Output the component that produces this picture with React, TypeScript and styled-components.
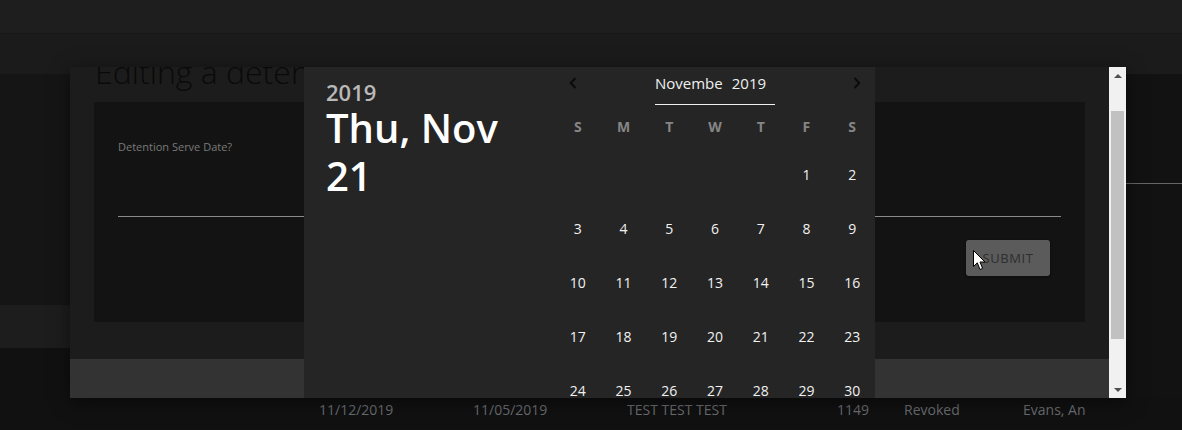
import styled, { createGlobalStyle } from "styled-components";

const GlobalStyle = createGlobalStyle`
  html, body {
    margin: 0;
    padding: 0;
    background: #111;
    overflow: hidden;
  }

  body {
    font-family: "Open Sans", "Noto Sans", sans-serif;
    color: #eee;
  }
`;

const weekDays = ["S", "M", "T", "W", "T", "F", "S"];

// november 2019 starts on a friday
const buildDays = () => {
  const cells: (number | null)[] = [null, null, null, null, null];
  for (let d = 1; d <= 30; d++) cells.push(d);
  return cells;
};

const rows = [
  ["11/12/2019", "11/05/2019", "TEST TEST TEST", "1149", "Revoked", "Evans, An"],
];

const Chevron = ({ dir }: { dir: "left" | "right" }) => (
  <svg width="8" height="12" viewBox="0 0 8 12">
    <path
      d={dir === "left" ? "M6.5 1 L1.8 6 L6.5 11" : "M1.5 1 L6.2 6 L1.5 11"}
      fill="none"
      stroke="#0b0b0b"
      strokeWidth="2"
    />
  </svg>
);

const Pointer = () => (
  <svg width="13" height="21" viewBox="0 0 13 21">
    <path
      d="M0.5 0.5 L0.5 16.5 L4.3 12.8 L7 19.5 L9.6 18.4 L7 12 L12 12 Z"
      fill="#fff"
      stroke="#000"
      strokeWidth="1"
    />
  </svg>
);

const App = () => {
  const days = buildDays();

  return (
    <>
      <GlobalStyle />
      <Page>
        <TopBar />
        <SubHeader />
        <Main>
          <LeftPane>
            <FormBlock />
            <Band />
            <Filler />
          </LeftPane>
          <RightPane>
            <RightTop />
          </RightPane>
        </Main>
        {rows.map((r, i) => (
          <TableRow key={i}>
            {r.map((c, j) => (
              <Cell key={j} $align={j === 3 ? "right" : "left"}>{c}</Cell>
            ))}
          </TableRow>
        ))}

        <Modal>
          <ModalBody>
            <Title>Editing a detention</Title>
            <Card>
              <FieldLabel>Detention Serve Date?</FieldLabel>
              <FieldInput />
              <Actions>
                <SubmitButton>SUBMIT</SubmitButton>
              </Actions>
            </Card>
            <ModalFooter />
          </ModalBody>
          <ScrollBar>
            <ScrollArrow $dir="up" />
            <ScrollTrack>
              <ScrollThumb style={{ marginTop: 27, height: 228 }} />
            </ScrollTrack>
            <ScrollArrow $dir="down" />
          </ScrollBar>
        </Modal>

        <Picker>
          <PickerHeader>
            <Year>2019</Year>
            <SelectedDate>Thu, Nov 21</SelectedDate>
          </PickerHeader>
          <Calendar>
            <NavRow>
              <NavButton><Chevron dir="left" /></NavButton>
              <MonthTitle>
                <span>Novembe</span>
                <span>2019</span>
              </MonthTitle>
              <NavButton><Chevron dir="right" /></NavButton>
            </NavRow>
            <WeekRow>
              {weekDays.map((d, i) => <WeekDay key={i}>{d}</WeekDay>)}
            </WeekRow>
            <DayGrid>
              {days.map((d, i) => <Day key={i}>{d ?? ""}</Day>)}
            </DayGrid>
          </Calendar>
        </Picker>

        <Cursor><Pointer /></Cursor>
      </Page>
    </>
  );
};

const Page = styled.div`
  position: relative;
  width: 1182px;
  height: 430px;
  overflow: hidden;
  display: flex;
  flex-direction: column;
  background: #111;
`;

const TopBar = styled.div`
  height: 33px;
  background: #1e1e1e;
  border-bottom: 1px solid #171717;
`;

const SubHeader = styled.div`
  height: 40px;
  background: #1b1b1b;
`;

const Main = styled.div`
  display: flex;
  height: 324px;
`;

const LeftPane = styled.div`
  flex: 1;
  display: flex;
  flex-direction: column;
`;

const FormBlock = styled.div`
  height: 231px;
  background: #151515;
`;

const Band = styled.div`
  height: 43px;
  background: #1d1d1d;
`;

const Filler = styled.div`
  flex: 1;
  background: #111;
`;

const RightPane = styled.div`
  width: 500px;
  background: #121212;
`;

const RightTop = styled.div`
  height: 109px;
  border-bottom: 1px solid #666;
`;

const TableRow = styled.div`
  display: grid;
  grid-template-columns: 154px 154px 160px 82px 35px 119px auto;
  padding-left: 319px;
  height: 32px;
  line-height: 24px;
  font-size: 14px;
  color: #6b6f73;
`;

const Cell = styled.div<{ $align: "left" | "right" }>`
  white-space: nowrap;
  text-align: ${p => p.$align};

  &:nth-child(4) {
    grid-column: 4;
  }

  &:nth-child(5) {
    grid-column: 6;
  }

  &:nth-child(6) {
    grid-column: 7;
  }
`;

const Modal = styled.div`
  position: absolute;
  left: 70px;
  top: 67px;
  width: 1056px;
  height: 331px;
  display: flex;
  box-shadow: 0 4px 18px rgba(0, 0, 0, 0.5);
`;

const ModalBody = styled.div`
  flex: 1;
  overflow: hidden;
  background: #1c1c1c;
  display: flex;
  flex-direction: column;
`;

const Title = styled.h2`
  margin: -15px 0 10px;
  padding-left: 25px;
  font-size: 32px;
  line-height: 40px;
  font-weight: 300;
  color: #0a0a0a;
  white-space: nowrap;
`;

const Card = styled.div`
  margin: 0 24px;
  height: 220px;
  box-sizing: border-box;
  padding: 37px 24px 0;
  background: #131313;
  display: flex;
  flex-direction: column;
`;

const FieldLabel = styled.label`
  font-size: 11px;
  line-height: 16px;
  color: #7a7a7a;
`;

const FieldInput = styled.div`
  height: 61px;
  border-bottom: 1px solid #8a8a8a;
`;

const Actions = styled.div`
  display: flex;
  justify-content: flex-end;
  padding: 23px 11px 0 0;
`;

const SubmitButton = styled.button`
  width: 84px;
  height: 36px;
  border: none;
  border-radius: 3px;
  background: #5b5b5b;
  color: #2e2e2e;
  font-family: inherit;
  font-size: 13px;
  letter-spacing: 0.6px;
  box-shadow: 0 1px 3px rgba(0, 0, 0, 0.4);
`;

const ModalFooter = styled.div`
  margin-top: 37px;
  flex: 1;
  background: #333;
`;

const ScrollBar = styled.div`
  width: 17px;
  background: #f1f1f1;
  display: flex;
  flex-direction: column;
`;

const ScrollArrow = styled.div<{ $dir: "up" | "down" }>`
  height: 17px;
  display: flex;
  align-items: center;
  justify-content: center;

  &::after {
    content: "";
    width: 0;
    height: 0;
    border-left: 4px solid transparent;
    border-right: 4px solid transparent;
    ${p => p.$dir === "up"
      ? "border-bottom: 4px solid #505050;"
      : "border-top: 4px solid #505050;"}
  }
`;

const ScrollTrack = styled.div`
  flex: 1;
  padding: 0 2px;
`;

const ScrollThumb = styled.div`
  background: #c1c1c1;
`;

const Picker = styled.div`
  position: absolute;
  left: 304px;
  top: 67px;
  width: 571px;
  height: 331px;
  overflow: hidden;
  background: #252525;
  display: flex;
`;

const PickerHeader = styled.div`
  width: 251px;
  box-sizing: border-box;
  padding: 13px 22px 0;
`;

const Year = styled.div`
  font-size: 22px;
  line-height: 24px;
  font-weight: 600;
  color: #b9b9b9;
`;

const SelectedDate = styled.div`
  font-size: 40px;
  line-height: 48px;
  font-weight: 600;
  color: #fff;
`;

const Calendar = styled.div`
  width: 320px;
  display: flex;
  flex-direction: column;
`;

const NavRow = styled.div`
  display: flex;
  justify-content: space-between;
  align-items: flex-start;
  padding: 6px 14px 0 14px;
`;

const NavButton = styled.div`
  width: 8px;
  height: 20px;
  display: flex;
  align-items: center;
`;

const MonthTitle = styled.div`
  width: 120px;
  display: flex;
  gap: 9px;
  font-size: 15px;
  line-height: 20px;
  color: #f0f0f0;
  padding-bottom: 11px;
  border-bottom: 1px solid #f0f0f0;
`;

const WeekRow = styled.div`
  display: grid;
  grid-template-columns: repeat(7, 1fr);
  margin-top: 10px;
  height: 24px;
`;

const WeekDay = styled.div`
  text-align: center;
  font-size: 14px;
  line-height: 24px;
  font-weight: 700;
  color: #858585;
`;

const DayGrid = styled.div`
  display: grid;
  grid-template-columns: repeat(7, 1fr);
  grid-auto-rows: 54px;
  margin-top: 8px;
`;

const Day = styled.div`
  display: flex;
  align-items: center;
  justify-content: center;
  font-size: 14px;
  font-weight: 500;
  color: #f2f2f2;
`;

const Cursor = styled.div`
  position: absolute;
  left: 973px;
  top: 250px;
  line-height: 0;
`;

export default App;
